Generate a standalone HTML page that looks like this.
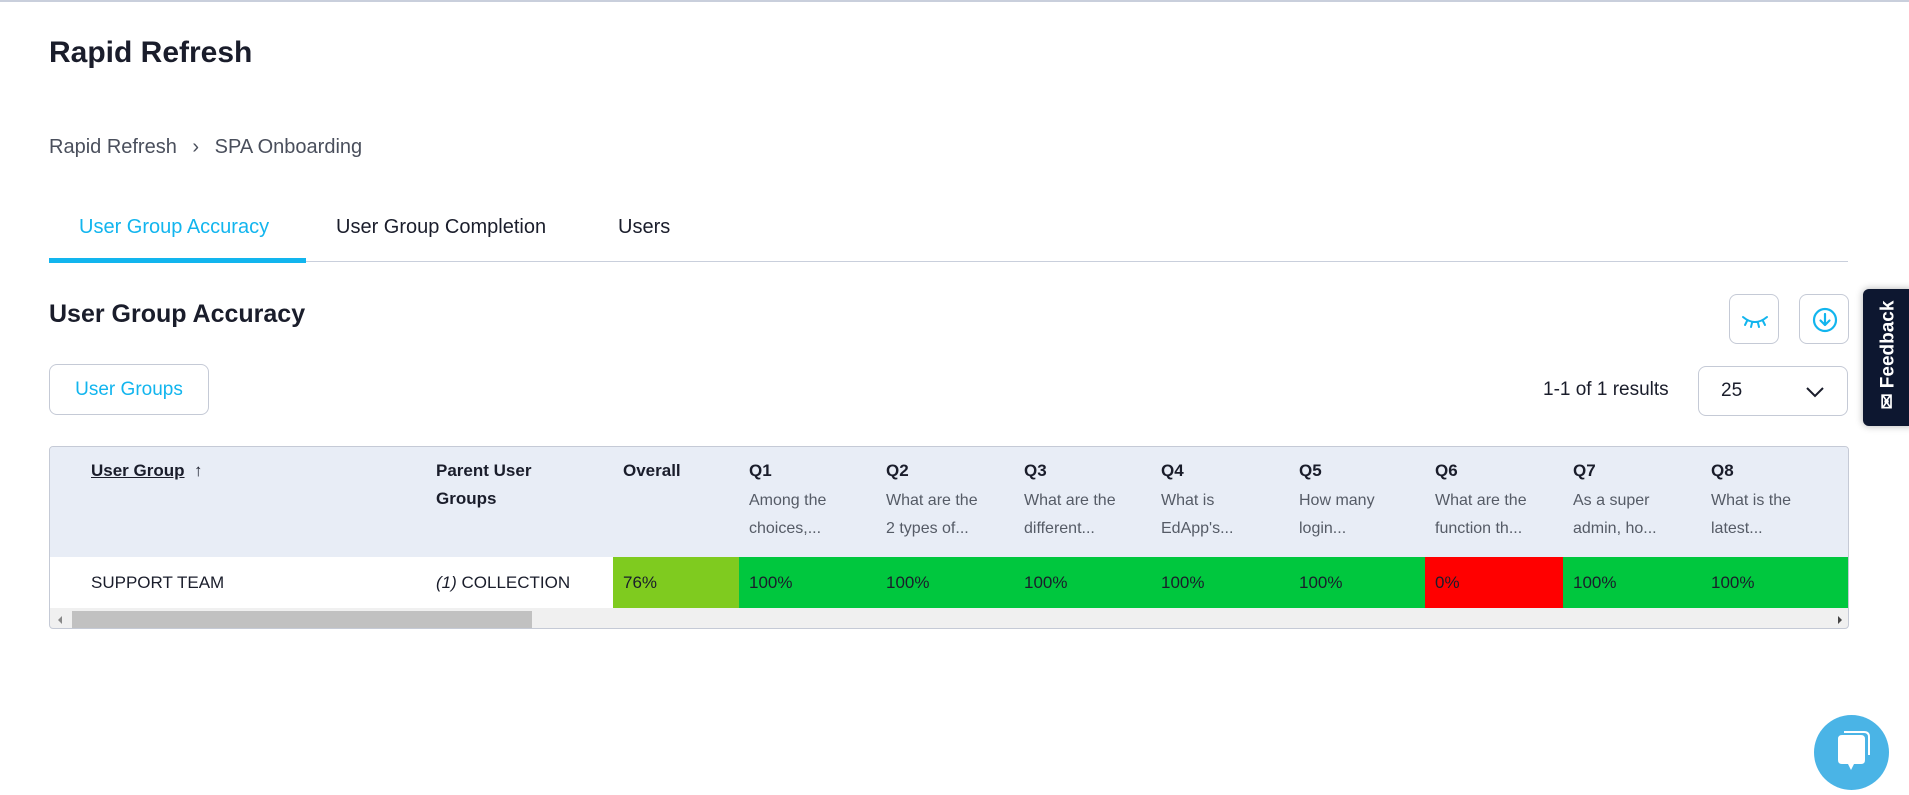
<!DOCTYPE html>
<html><head><meta charset="utf-8"><style>
*{box-sizing:border-box;margin:0;padding:0}
body{width:1909px;height:795px;background:#fff;font-family:"Liberation Sans",sans-serif;color:#1a1d2b;position:relative;overflow:hidden;border-top:2px solid #c9cfdc}
.a{position:absolute;white-space:nowrap}
.btn{position:absolute;border:1px solid #c5cad6;border-radius:8px;background:#fff}
.th{position:absolute;top:0;height:110px;padding-top:10px;font-size:17px;font-weight:bold;line-height:28px;color:#1a1d2b}
.th span{display:block;font-weight:normal;font-size:16px;color:#555b66;line-height:28px;margin-top:2px}
.td{position:absolute;top:110px;height:51px;font-size:17px;line-height:51px;padding-left:10px;color:#1a1d2b}
</style></head><body>
<div class="a" style="left:49px;top:34px;font-size:30px;font-weight:bold">Rapid Refresh</div>
<div class="a" style="left:49px;top:134px;font-size:20px;color:#4a4f5c">Rapid Refresh <span style="display:inline-block;margin:0 10px 0 10px">&#x203A;</span> SPA Onboarding</div>
<div class="a" style="left:79px;top:214px;font-size:20px;color:#12b5ee">User Group Accuracy</div>
<div class="a" style="left:336px;top:214px;font-size:20px">User Group Completion</div>
<div class="a" style="left:618px;top:214px;font-size:20px">Users</div>
<div class="a" style="left:49px;top:259px;width:1799px;height:1px;background:#c9cfdc"></div>
<div class="a" style="left:49px;top:256px;width:257px;height:5px;background:#12b5ee"></div>
<div class="a" style="left:49px;top:298px;font-size:25px;font-weight:bold">User Group Accuracy</div>
<div class="btn" style="left:1729px;top:292px;width:50px;height:50px"><svg width="50" height="50" viewBox="0 0 50 50"><path d="M13 22 Q25 32 37 22 M17 26 l-2 4 M22 28 l-1 4 M28 28 l1 4 M33 26 l2 4" stroke="#12b5ee" stroke-width="2" fill="none" stroke-linecap="round"/></svg></div>
<div class="btn" style="left:1799px;top:292px;width:50px;height:50px"><svg width="50" height="50" viewBox="0 0 50 50"><circle cx="25" cy="25" r="11" stroke="#12b5ee" stroke-width="2.2" fill="none"/><path d="M25 19 v11 M20.5 25.5 L25 30 L29.5 25.5" stroke="#12b5ee" stroke-width="2.2" fill="none" stroke-linecap="round" stroke-linejoin="round"/></svg></div>
<div class="btn" style="left:49px;top:362px;width:160px;height:51px;font-size:19px;color:#12b5ee;line-height:49px;text-align:center">User Groups</div>
<div class="a" style="left:1543px;top:377px;font-size:19px">1-1 of 1 results</div>
<div class="btn" style="left:1698px;top:364px;width:150px;height:50px;font-size:19px;line-height:48px;padding-left:22px">25<svg style="position:absolute;right:22px;top:19px" width="20" height="12" viewBox="0 0 20 12"><path d="M2 2 L10 10 L18 2" stroke="#1a1d2b" stroke-width="2" fill="none"/></svg></div>
<div class="a" style="left:1863px;top:287px;width:50px;height:137px;background:#0d1730;border-radius:6px 0 0 6px;box-shadow:0 0 8px rgba(0,0,0,.3)">
<div style="position:absolute;left:25px;top:66px;transform:translate(-50%,-50%) rotate(-90deg);color:#fff;font-size:19px;font-weight:bold;white-space:nowrap">&#9993; Feedback</div></div>
<div class="a" style="left:49px;top:444px;width:1800px;height:183px;border:1px solid #c5cad6;border-radius:4px;overflow:hidden;background:#f0f0f0">
<div class="a" style="left:0;top:0;width:1800px;height:110px;background:#e8edf6"></div>
<div class="a" style="left:0;top:110px;width:1800px;height:51px;background:#fff"></div>
<div class="th" style="left:41px"><u>User Group</u> &nbsp;&#x2191;</div>
<div class="th" style="left:386px">Parent User<br>Groups</div>
<div class="th" style="left:573px">Overall</div>
<div class="th" style="left:699px">Q1<span>Among the<br>choices,...</span></div>
<div class="th" style="left:836px">Q2<span>What are the<br>2 types of...</span></div>
<div class="th" style="left:974px">Q3<span>What are the<br>different...</span></div>
<div class="th" style="left:1111px">Q4<span>What is<br>EdApp's...</span></div>
<div class="th" style="left:1249px">Q5<span>How many<br>login...</span></div>
<div class="th" style="left:1385px">Q6<span>What are the<br>function th...</span></div>
<div class="th" style="left:1523px">Q7<span>As a super<br>admin, ho...</span></div>
<div class="th" style="left:1661px">Q8<span>What is the<br>latest...</span></div>
<div class="td" style="left:31px">SUPPORT TEAM</div>
<div class="td" style="left:376px"><i>(1)</i> COLLECTION</div>
<div class="td" style="left:563px;width:126px;background:#7fcb1f">76%</div>
<div class="td" style="left:689px;width:735px;background:#00c73e">100%</div>
<div class="td" style="left:826px">100%</div>
<div class="td" style="left:964px">100%</div>
<div class="td" style="left:1101px">100%</div>
<div class="td" style="left:1239px">100%</div>
<div class="td" style="left:1375px;width:138px;background:#ff0000">0%</div>
<div class="td" style="left:1513px;width:290px;background:#00c73e">100%</div>
<div class="td" style="left:1651px">100%</div>
<div class="a" style="left:22px;top:164px;width:460px;height:17px;background:#c1c1c1"></div>
<div class="a" style="left:8px;top:169px;width:0;height:0;border:4px solid transparent;border-right:4px solid #888;border-left:0"></div>
<div class="a" style="left:1788px;top:169px;width:0;height:0;border:4px solid transparent;border-left:4px solid #444;border-right:0"></div>
</div>
<div class="a" style="left:1814px;top:713px;width:75px;height:75px;border-radius:50%;background:#4ab4e6">
<svg width="75" height="75" viewBox="0 0 75 75"><path d="M24 24 Q24 20 28 20 H47 Q51 20 51 24 V45 Q51 49 47 49 H40 L37 55 L34 49 H28 Q24 49 24 45 Z" fill="#fff"/><path d="M30 17 H50 Q55 17 55 22 V40" stroke="#fff" stroke-width="2" fill="none"/></svg></div>
</body></html>
